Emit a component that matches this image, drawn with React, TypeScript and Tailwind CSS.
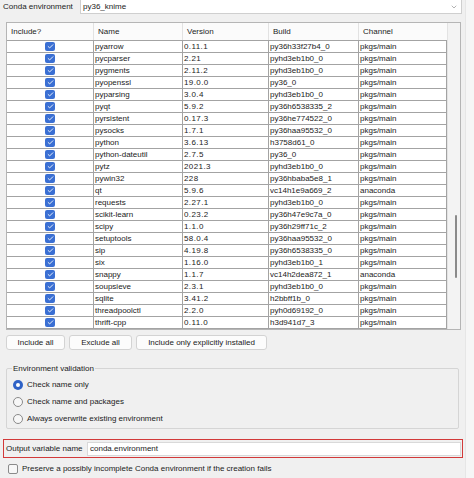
import { Check, ChevronDown } from 'lucide-react';

type Pkg = { name: string; version: string; build: string; channel: string };

const packages: Pkg[] = [
  { name: 'pyarrow', version: '0.11.1', build: 'py36h33f27b4_0', channel: 'pkgs/main' },
  { name: 'pycparser', version: '2.21', build: 'pyhd3eb1b0_0', channel: 'pkgs/main' },
  { name: 'pygments', version: '2.11.2', build: 'pyhd3eb1b0_0', channel: 'pkgs/main' },
  { name: 'pyopenssl', version: '19.0.0', build: 'py36_0', channel: 'pkgs/main' },
  { name: 'pyparsing', version: '3.0.4', build: 'pyhd3eb1b0_0', channel: 'pkgs/main' },
  { name: 'pyqt', version: '5.9.2', build: 'py36h6538335_2', channel: 'pkgs/main' },
  { name: 'pyrsistent', version: '0.17.3', build: 'py36he774522_0', channel: 'pkgs/main' },
  { name: 'pysocks', version: '1.7.1', build: 'py36haa95532_0', channel: 'pkgs/main' },
  { name: 'python', version: '3.6.13', build: 'h3758d61_0', channel: 'pkgs/main' },
  { name: 'python-dateutil', version: '2.7.5', build: 'py36_0', channel: 'pkgs/main' },
  { name: 'pytz', version: '2021.3', build: 'pyhd3eb1b0_0', channel: 'pkgs/main' },
  { name: 'pywin32', version: '228', build: 'py36hbaba5e8_1', channel: 'pkgs/main' },
  { name: 'qt', version: '5.9.6', build: 'vc14h1e9a669_2', channel: 'anaconda' },
  { name: 'requests', version: '2.27.1', build: 'pyhd3eb1b0_0', channel: 'pkgs/main' },
  { name: 'scikit-learn', version: '0.23.2', build: 'py36h47e9c7a_0', channel: 'pkgs/main' },
  { name: 'scipy', version: '1.1.0', build: 'py36h29ff71c_2', channel: 'pkgs/main' },
  { name: 'setuptools', version: '58.0.4', build: 'py36haa95532_0', channel: 'pkgs/main' },
  { name: 'sip', version: '4.19.8', build: 'py36h6538335_0', channel: 'pkgs/main' },
  { name: 'six', version: '1.16.0', build: 'pyhd3eb1b0_1', channel: 'pkgs/main' },
  { name: 'snappy', version: '1.1.7', build: 'vc14h2dea872_1', channel: 'anaconda' },
  { name: 'soupsieve', version: '2.3.1', build: 'pyhd3eb1b0_0', channel: 'pkgs/main' },
  { name: 'sqlite', version: '3.41.2', build: 'h2bbff1b_0', channel: 'pkgs/main' },
  { name: 'threadpoolctl', version: '2.2.0', build: 'pyh0d69192_0', channel: 'pkgs/main' },
  { name: 'thrift-cpp', version: '0.11.0', build: 'h3d941d7_3', channel: 'pkgs/main' },
];

const cols = 'grid grid-cols-[87px_89px_86px_90px_88px]';

function Radio({ checked, label }: { checked?: boolean; label: string }) {
  return (
    <div className="flex items-center h-[17px]">
      {checked ? (
        <span className="w-[10px] h-[10px] rounded-full bg-[#2f62c6] flex items-center justify-center">
          <span className="w-[4px] h-[4px] rounded-full bg-white" />
        </span>
      ) : (
        <span className="w-[10px] h-[10px] rounded-full border border-[#8a8a8a] bg-[#f7f7f7]" />
      )}
      <span className="ml-[4px]">{label}</span>
    </div>
  );
}

export default function App() {
  return (
    <div
      className="w-[474px] h-[478px] overflow-hidden bg-[#f0f0f0] text-[#1b1b1b] flex text-[8px] leading-none"
      style={{ fontFamily: '"Liberation Sans", Arial, sans-serif' }}
    >
      <div className="w-[465px] flex flex-col">
        {/* environment selector */}
        <div className="flex items-stretch h-[14px]">
          <span className="w-[80px] pl-[3px] flex items-center">Conda environment</span>
          <div className="w-[382px] bg-white border border-t-0 border-[#cfcfcf] flex items-center pl-[2px] pr-[3px]">
            <span className="flex-1">py36_knime</span>
            <ChevronDown size={8} strokeWidth={1.5} className="text-[#666]" />
          </div>
        </div>

        {/* package table */}
        <div className="mt-[8px] ml-[6px] w-[455px] h-[308px] border border-[#b5b5b5] bg-[#f7f7f7] flex">
          <div className="w-[440px] flex flex-col">
            <div className={`${cols} h-[18px] bg-[#fbfbfb] border-b border-[#a3a3a3]`}>
              {['Include?', 'Name', 'Version', 'Build', 'Channel'].map((h, i) => (
                <div
                  key={h}
                  className={`flex items-center pl-[4px] ${i < 4 ? 'border-r border-[#e2e2e2]' : ''}`}
                >
                  {h}
                </div>
              ))}
            </div>
            {packages.map((p) => (
              <div key={p.name} className={`${cols} h-[12px] bg-white border-b border-[#a3a3a3]`}>
                <div className="flex items-center justify-center border-r border-[#a3a3a3]">
                  <span className="w-[10px] h-[9px] rounded-[2px] bg-[#3a6fd3] flex items-center justify-center">
                    <Check size={7} strokeWidth={3} className="text-white" />
                  </span>
                </div>
                <div className="flex items-center pl-[1px] border-r border-[#a3a3a3] whitespace-nowrap">{p.name}</div>
                <div className="flex items-center pl-[1px] border-r border-[#a3a3a3] tracking-[0.4px]">{p.version}</div>
                <div className="flex items-center pl-[1px] border-r border-[#a3a3a3]">{p.build}</div>
                <div className="flex items-center pl-[1px] border-r border-[#a3a3a3]">{p.channel}</div>
              </div>
            ))}
          </div>
          {/* scrollbar */}
          <div className="flex-1 bg-[#f3f3f3] border-l border-[#e3e3e3] flex justify-center">
            <div className="w-[2px] h-[63px] mt-[192px] ml-[4px] rounded-full bg-[#8a8a8a]" />
          </div>
        </div>

        {/* buttons */}
        <div className="flex gap-[4px] ml-[6px] mt-[5px]">
          {['Include all', 'Exclude all', 'Include only explicitly installed'].map((b, i) => (
            <button
              key={b}
              className={`h-[15px] rounded-[3px] border border-[#d3d3d3] bg-[#fcfcfc] flex items-center justify-center ${
                ['w-[59px]', 'w-[63px]', 'w-[131px]'][i]
              }`}
            >
              {b}
            </button>
          ))}
        </div>

        {/* validation group */}
        <div className="relative mt-[18px] ml-[6px] w-[453px] h-[61px] border border-[#d5d5d5] rounded-[2px] pt-[7px] pl-[6px]">
          <span className="absolute -top-[4px] left-[5px] px-[1px] bg-[#f0f0f0]">Environment validation</span>
          <Radio checked label="Check name only" />
          <Radio label="Check name and packages" />
          <Radio label="Always overwrite existing environment" />
        </div>

        {/* output variable */}
        <div className="mt-[10px] ml-[3px] w-[460px] h-[19px] border-[1.5px] border-[#d23a3a] flex items-center pl-[2px] pr-[1px]">
          <span className="w-[81px]">Output variable name</span>
          <div className="flex-1 h-[14px] bg-white border border-[#d9d9d9] flex items-center pl-[2px]">
            conda.environment
          </div>
        </div>

        {/* preserve checkbox */}
        <div className="flex items-center mt-[6px] ml-[8px]">
          <span className="w-[10px] h-[10px] rounded-[2px] border border-[#8a8a8a] bg-[#f7f7f7]" />
          <span className="ml-[4px]">Preserve a possibly incomplete Conda environment if the creation fails</span>
        </div>
      </div>
      <div className="flex-1 bg-[#f6f6f6] border-l border-[#e6e6e6]" />
    </div>
  );
}
